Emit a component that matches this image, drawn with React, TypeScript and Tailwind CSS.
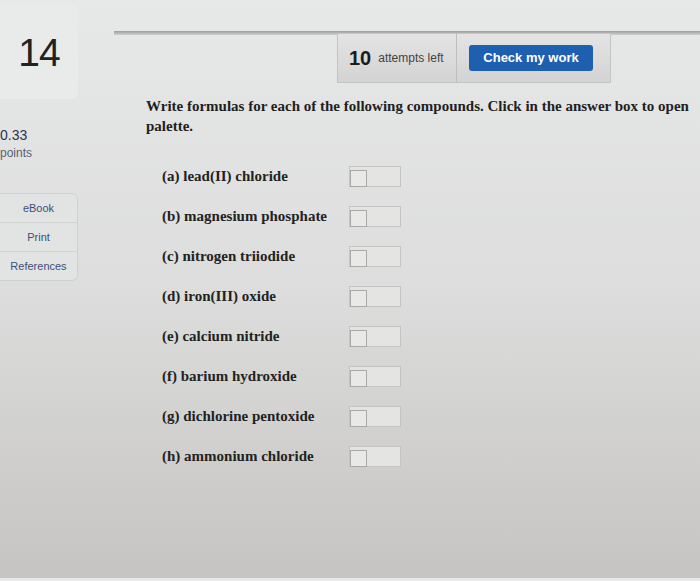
const items = [
  "(a) lead(II) chloride",
  "(b) magnesium phosphate",
  "(c) nitrogen triiodide",
  "(d) iron(III) oxide",
  "(e) calcium nitride",
  "(f) barium hydroxide",
  "(g) dichlorine pentoxide",
  "(h) ammonium chloride",
];

function AnswerBox() {
  return (
    <div className="flex h-[21px] w-[52px] border border-[#c4c4c2] bg-[#e4e5e3]">
      <div className="mt-[3px] h-[17px] w-[17px] border border-[#a9a9a7] bg-[#e9eae8]" />
    </div>
  );
}

export default function App() {
  return (
    <div className="relative h-[581px] w-[700px] overflow-hidden bg-linear-to-b from-[#e7e9e8] via-[#dcdddc] to-[#c6c4c2] font-['Liberation_Sans',Arial,sans-serif] text-[#1e1e1e]">
      <div className="flex">
        {/* left column */}
        <div className="flex w-[80px] shrink-0 flex-col">
          <div className="mt-[5px] flex h-[94px] w-[78px] items-center justify-center rounded-r-md bg-[#e9ebea]">
            <span className="text-[39px] leading-none tracking-tight text-[#222]">14</span>
          </div>
          <div className="mt-[28px] text-[14px] leading-[17px] text-[#2a3550]">0.33</div>
          <div className="mt-[2px] text-[12px] leading-[14px] text-[#5a6070]">points</div>
          <div className="mt-[33px] flex w-[78px] flex-col rounded-r-md border border-l-0 border-[#cfd1d0] bg-[#e2e4e3] text-[11px] text-[#3d4f78]">
            <div className="flex h-[29px] items-center justify-center border-b border-[#d0d2d1]">eBook</div>
            <div className="flex h-[29px] items-center justify-center border-b border-[#d0d2d1]">Print</div>
            <div className="flex h-[28px] items-center justify-center">References</div>
          </div>
        </div>

        {/* main */}
        <div className="flex flex-1 flex-col">
          <div className="ml-[34px] mt-[31px] flex">
            <div className="h-[4px] flex-1 bg-linear-to-b from-[#9c9d9c] to-[#cfd0cf]" />
          </div>
          <div className="ml-[257px] -mt-[2px] flex h-[50px] w-[274px] items-center border border-[#c3c4c3] bg-linear-to-b from-[#e3e4e3] to-[#d2d3d2]">
            <div className="flex h-full w-[119px] items-center border-r border-[#bdbebd] pl-[11px]">
              <span className="text-[20px] font-bold leading-none text-[#1b1b1b]">10</span>
              <span className="ml-[7px] text-[12px] text-[#444]">attempts left</span>
            </div>
            <div className="ml-[12px] flex h-[26px] w-[124px] items-center justify-center rounded-[3px] bg-[#1f5fb0] text-[13px] font-bold text-white">
              Check my work
            </div>
          </div>

          <div className="ml-[66px] mt-[13px] font-['Liberation_Serif','Times_New_Roman',serif] text-[15px] font-bold leading-[20px] text-[#1f1f1f]">
            Write formulas for each of the following compounds. Click in the answer box to open palette.
          </div>

          <div className="ml-[82px] mt-[30px] flex flex-col gap-[19px] font-['Liberation_Serif','Times_New_Roman',serif]">
            {items.map((t) => (
              <div key={t} className="flex h-[21px] items-center">
                <span className="w-[187px] text-[15px] font-bold text-[#222]">{t}</span>
                <AnswerBox />
              </div>
            ))}
          </div>
        </div>
      </div>
      <div className="absolute bottom-0 left-0 h-[3px] w-full bg-[#e8e8e8]" />
    </div>
  );
}
